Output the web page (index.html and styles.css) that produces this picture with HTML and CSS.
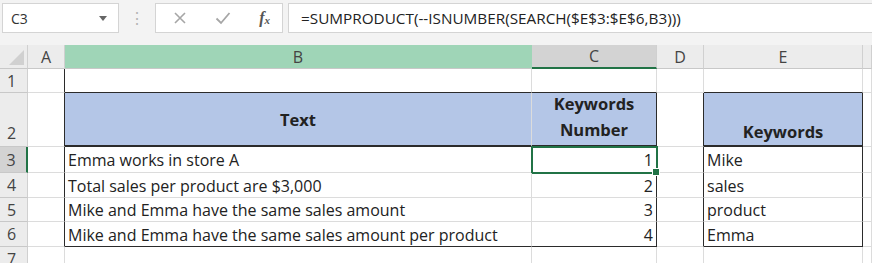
FILE: index.html
```html
<!DOCTYPE html>
<html lang="en">
<head>
    <meta charset="UTF-8">
    <title>Keywords count</title>
    <link rel="stylesheet" href="styles.css">
</head>
<body>

    <div class="toolbar">
        <div class="name-box">
            <span>C3</span>
            <span class="caret"></span>
        </div>
        <div class="grip">&#8942;</div>
        <div class="fx-buttons">
            <svg width="14" height="14" viewBox="0 0 14 14"><path d="M2 2 L12 12 M12 2 L2 12" stroke="#a6a6a6" stroke-width="1.6" fill="none"/></svg>
            <svg width="16" height="14" viewBox="0 0 16 14"><path d="M1.5 7.5 L6 12 L14.5 2" stroke="#a6a6a6" stroke-width="1.8" fill="none"/></svg>
            <span class="fx">f<sub>x</sub></span>
        </div>
        <div class="formula">=SUMPRODUCT(--ISNUMBER(SEARCH($E$3:$E$6,B3)))</div>
    </div>

    <div class="sheet">
        <!-- column headers -->
        <div class="corner"><span class="tri"></span></div>
        <div class="col-head">A</div>
        <div class="col-head col-green">B</div>
        <div class="col-head col-sel">C</div>
        <div class="col-head">D</div>
        <div class="col-head">E</div>
        <div class="col-head"></div>

        <!-- row 1 -->
        <div class="row-head">1</div>
        <div class="cell b-right-dark"></div>
        <div class="cell b-bottom-dark"></div>
        <div class="cell b-bottom-dark"></div>
        <div class="cell"></div>
        <div class="cell b-bottom-dark"></div>
        <div class="cell"></div>

        <!-- row 2 -->
        <div class="row-head bottom">2</div>
        <div class="cell b-right-dark"></div>
        <div class="cell head center b-head">Text</div>
        <div class="cell head two-line b-head b-right-dark">Keywords<br>Number</div>
        <div class="cell b-right-dark"></div>
        <div class="cell head bottom-text b-head b-right-dark">Keywords</div>
        <div class="cell"></div>

        <!-- row 3 -->
        <div class="row-head row-sel">3</div>
        <div class="cell b-right-dark"></div>
        <div class="cell">Emma works in store A</div>
        <div class="cell num b-right-dark selected">1<span class="handle"></span></div>
        <div class="cell b-right-dark"></div>
        <div class="cell b-right-dark">Mike</div>
        <div class="cell"></div>

        <!-- row 4 -->
        <div class="row-head">4</div>
        <div class="cell b-right-dark"></div>
        <div class="cell">Total sales per product are $3,000</div>
        <div class="cell num b-right-dark">2</div>
        <div class="cell b-right-dark"></div>
        <div class="cell b-right-dark">sales</div>
        <div class="cell"></div>

        <!-- row 5 -->
        <div class="row-head">5</div>
        <div class="cell b-right-dark"></div>
        <div class="cell">Mike and Emma have the same sales amount</div>
        <div class="cell num b-right-dark">3</div>
        <div class="cell b-right-dark"></div>
        <div class="cell b-right-dark">product</div>
        <div class="cell"></div>

        <!-- row 6 -->
        <div class="row-head">6</div>
        <div class="cell b-right-dark"></div>
        <div class="cell b-bottom-dark">Mike and Emma have the same sales amount per product</div>
        <div class="cell num b-right-dark b-bottom-dark">4</div>
        <div class="cell b-right-dark"></div>
        <div class="cell b-right-dark b-bottom-dark">Emma</div>
        <div class="cell"></div>

        <!-- row 7 -->
        <div class="row-head">7</div>
        <div class="cell"></div>
        <div class="cell"></div>
        <div class="cell"></div>
        <div class="cell"></div>
        <div class="cell"></div>
        <div class="cell"></div>
    </div>

</body>
</html>
```

FILE: styles.css
```css
body {
    margin: 0;
    background: #fff;
    font-family: "Open Sans", "Liberation Sans", sans-serif;
    color: #222;
    overflow: hidden;
}

.toolbar {
    height: 45px;
    background: #f3f3f3;
    display: flex;
    align-items: flex-start;
    padding: 3px 0 0 2px;
    box-sizing: border-box;
}

.name-box {
    width: 117px;
    height: 30px;
    box-sizing: border-box;
    background: #fff;
    border: 1px solid #d4d4d4;
    display: flex;
    align-items: center;
    justify-content: space-between;
    padding: 0 11px 0 8px;
    font-size: 14px;
    color: #333;
}

.caret {
    width: 0;
    height: 0;
    border-left: 4px solid transparent;
    border-right: 4px solid transparent;
    border-top: 5px solid #666;
}

.grip {
    width: 36px;
    text-align: center;
    color: #b5b5b5;
    font-size: 16px;
    line-height: 30px;
}

.fx-buttons {
    width: 128px;
    height: 30px;
    box-sizing: border-box;
    background: #fff;
    border: 1px solid #d4d4d4;
    display: flex;
    align-items: center;
    justify-content: space-between;
    padding: 0 12px 0 17px;
}

.fx {
    font-family: "Liberation Serif", serif;
    font-style: italic;
    font-weight: bold;
    font-size: 16px;
    color: #555;
}

.fx sub {
    font-size: 11px;
    vertical-align: -1px;
}

.formula {
    flex: 1;
    height: 30px;
    margin-left: 5px;
    box-sizing: border-box;
    background: #fff;
    border: 1px solid #d4d4d4;
    border-right: none;
    padding-left: 12px;
    font-size: 15.3px;
    line-height: 28px;
    color: #222;
}

.sheet {
    display: grid;
    grid-template-columns: 28px 37px 467px 125px 47px 159px 1fr;
    grid-template-rows: 24px 24px 54px 26px 25px 24px 25px 24px;
}

.corner,
.col-head,
.row-head {
    background: #ececec;
    border-right: 1px solid #d0d0d0;
    border-bottom: 1px solid #c8c8c8;
    box-sizing: border-box;
    color: #444;
    font-size: 16px;
}

.corner {
    position: relative;
}

.tri {
    position: absolute;
    right: 3px;
    bottom: 3px;
    width: 0;
    height: 0;
    border-left: 15px solid transparent;
    border-bottom: 15px solid #d0d0d0;
}

.col-head {
    display: flex;
    align-items: center;
    justify-content: center;
}

.col-green {
    background: #9fd5b7;
    border-right-color: #9fd5b7;
}

.col-sel {
    background: #d3d3d3;
    border-bottom: 2px solid #217346;
}

.row-head {
    display: flex;
    align-items: center;
    justify-content: center;
    padding-right: 4px;
}

.row-head.bottom {
    align-items: flex-end;
    padding-bottom: 2px;
}

.row-sel {
    background: #d3d3d3;
    border-right: 2px solid #217346;
}

.cell {
    border-right: 1px solid #dcdcdc;
    border-bottom: 1px solid #dcdcdc;
    box-sizing: border-box;
    display: flex;
    align-items: center;
    padding: 1px 3px 0;
    font-size: 16px;
    white-space: nowrap;
    position: relative;
}

.b-right-dark {
    border-right: 1px solid #2b2b2b;
}

.b-bottom-dark {
    border-bottom: 1px solid #2b2b2b;
}

.head {
    background: #b4c6e7;
    font-weight: bold;
    font-size: 16.5px;
}

.b-head {
    border-bottom: 2px solid #2b2b2b;
}

.center {
    justify-content: center;
}

.two-line {
    justify-content: center;
    text-align: center;
    line-height: 26px;
    align-items: flex-end;
    padding-bottom: 2px;
}

.bottom-text {
    justify-content: center;
    align-items: flex-end;
    padding-bottom: 2px;
}

.num {
    justify-content: flex-end;
}

.selected {
    outline: 2px solid #217346;
    outline-offset: -1px;
}

.handle {
    position: absolute;
    right: -4px;
    bottom: -4px;
    width: 6px;
    height: 6px;
    background: #217346;
    border: 1px solid #fff;
    z-index: 2;
}
```
